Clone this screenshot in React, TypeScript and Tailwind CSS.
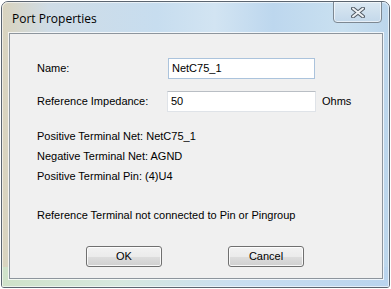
export default function App() {
  return (
    <div className="w-[391px] h-[289px] bg-white p-[1px]">
      <div
        className="relative w-[389px] h-[287px] rounded-t-[7px] rounded-b-[3px] border border-[#5b6570] overflow-hidden"
        style={{ fontFamily: '"Liberation Sans", Arial, sans-serif' }}
      >
        {/* aero frame glass */}
        <div className="absolute inset-0 bg-[linear-gradient(90deg,#d9d3bd_0%,#cfdce6_12%,#c7ddef_40%,#d2e4f2_55%,#bdd7ee_70%,#c9e0f0_88%,#bcd6ec_100%)]" />
        <div className="absolute inset-x-0 bottom-0 h-[20px] bg-[linear-gradient(90deg,#cfe2c9_0%,#d6e8de_30%,#c9def0_60%,#b9d4ee_100%)]" />
        <div className="absolute inset-0 rounded-t-[6px] border border-white/60" />

        {/* title bar */}
        <div className="relative flex h-[31px] items-start">
          <span
            className="ml-[10px] mt-[8px] text-[12px] text-black"
            style={{ fontFamily: '"Open Sans", "Liberation Sans", sans-serif' }}
          >
            Port Properties
          </span>
          <div className="absolute right-[7px] top-[-1px] flex h-[22px] w-[49px] items-center justify-center rounded-b-[4px] border border-[#7d8892] bg-[linear-gradient(180deg,#dbe8f2,#c3d8ea)] shadow-[inset_0_0_0_1px_rgba(255,255,255,0.6)]">
            <svg width="14" height="11" viewBox="0 0 14 11">
              <path d="M2 1.5 L12 9.5 M12 1.5 L2 9.5" stroke="#535c66" strokeWidth="4" strokeLinecap="round" />
              <path d="M2 1.5 L12 9.5 M12 1.5 L2 9.5" stroke="#eef2f5" strokeWidth="2" strokeLinecap="round" />
            </svg>
          </div>
        </div>

        {/* client area */}
        <div className="relative ml-[7px] h-[246px] w-[374px] border border-[#8d959d] bg-[#f0f0f0] shadow-[0_0_0_1px_rgba(255,255,255,0.75)] text-[11px] text-black">
          <div className="flex flex-col pl-[27px] pt-[24px]">
            <div className="flex h-[21px] items-center">
              <span className="w-[131px]">Name:</span>
              <div className="flex h-[21px] w-[147px] items-center border border-[#abc3dc] bg-white pl-[3px]">NetC75_1</div>
            </div>
            <div className="mt-[12px] flex h-[21px] items-center">
              <span className="w-[130px]">Reference Impedance:</span>
              <div className="flex h-[21px] w-[149px] items-center border border-[#dfe3e8] border-t-[#b9bec4] bg-white pl-[3px]">50</div>
              <span className="ml-[6px]">Ohms</span>
            </div>
            <div className="mt-[14px] flex flex-col">
              <span className="h-[20px] leading-[20px]">Positive Terminal Net: NetC75_1</span>
              <span className="h-[20px] leading-[20px]">Negative Terminal Net: AGND</span>
              <span className="h-[20px] leading-[20px]">Positive Terminal Pin: (4)U4</span>
            </div>
            <span className="mt-[19px] h-[20px] leading-[20px]">Reference Terminal not connected to Pin or Pingroup</span>
            <div className="mt-[21px] flex gap-[66px] pl-[49px]">
              <button className="h-[21px] w-[76px] rounded-[3px] border border-[#707070] bg-[linear-gradient(180deg,#f2f2f2_0%,#ebebeb_50%,#dddddd_51%,#cfcfcf_100%)] text-[11px] shadow-[inset_0_0_0_1px_rgba(255,255,255,0.8)]">
                OK
              </button>
              <button className="h-[21px] w-[76px] rounded-[3px] border border-[#707070] bg-[linear-gradient(180deg,#f2f2f2_0%,#ebebeb_50%,#dddddd_51%,#cfcfcf_100%)] text-[11px] shadow-[inset_0_0_0_1px_rgba(255,255,255,0.8)]">
                Cancel
              </button>
            </div>
          </div>
        </div>
      </div>
    </div>
  );
}
